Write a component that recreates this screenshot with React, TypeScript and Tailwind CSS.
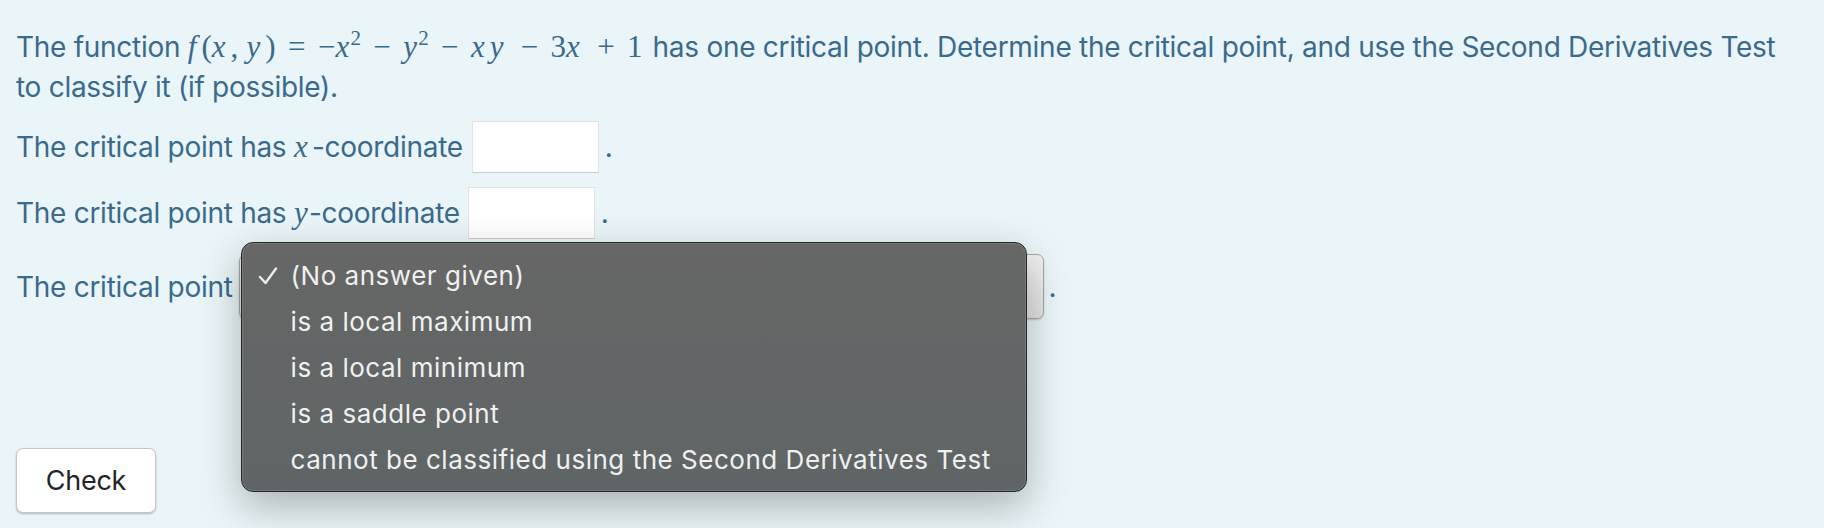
import React from 'react';

const Var = ({ children, tight }: { children: React.ReactNode; tight?: boolean }) => (
  <span className={`font-['Liberation_Serif',serif] italic text-[31px] tracking-normal ${tight ? 'mr-[0.04em]' : 'mr-[0.16em]'}`}>
    {children}
  </span>
);

const Op = ({ children }: { children: React.ReactNode }) => (
  <span className="font-['Liberation_Serif',serif] text-[31px] tracking-normal mx-[0.4em]">{children}</span>
);

const Num = ({ children }: { children: React.ReactNode }) => (
  <span className="font-['Liberation_Serif',serif] text-[31px] tracking-normal">{children}</span>
);

const Sq = () => (
  <sup className="font-['Liberation_Serif',serif] text-[21px] tracking-normal top-[-0.55em]">2</sup>
);

const options = [
  '(No answer given)',
  'is a local maximum',
  'is a local minimum',
  'is a saddle point',
  'cannot be classified using the Second Derivatives Test',
];

const Check = () => (
  <svg width="20" height="18" viewBox="0 0 20 18" className="block">
    <path d="M2 10 L7.5 16 L18 1.5" fill="none" stroke="#ececec" strokeWidth="2.4" strokeLinecap="round" strokeLinejoin="round" />
  </svg>
);

const App: React.FC = () => {
  return (
    <div className="h-[528px] w-full overflow-hidden bg-[#e9f5f8] pl-[16px] pt-[27px] font-['Inter',sans-serif] text-[28px] leading-[40px] tracking-[-0.01em] text-[#3a6a8c]">
      <p className="whitespace-nowrap">
        The function{' '}
        <Var>f</Var>
        <Num>(</Num>
        <Var>x</Var>
        <Num>,</Num>
        <span className="ml-[0.3em]" />
        <Var>y</Var>
        <Num>)</Num>
        <Op>=</Op>
        <Num>−</Num>
        <Var tight>x</Var>
        <Sq />
        <Op>−</Op>
        <Var tight>y</Var>
        <Sq />
        <Op>−</Op>
        <Var>x</Var>
        <Var>y</Var>
        <Op>−</Op>
        <Num>3</Num>
        <Var>x</Var>
        <Op>+</Op>
        <Num>1</Num>
        <span className="ml-[10px]">has one critical point. Determine the critical point, and use the Second Derivatives Test</span>
        <br />
        to classify it (if possible).
      </p>

      <div className="mt-[14px] flex h-[52px] items-center whitespace-nowrap">
        <span>
          The critical point has <Var tight>x</Var>
          <span className="ml-[3px]">-coordinate</span>
        </span>
        <input
          type="text"
          className="ml-[9px] h-[52px] w-[127px] border border-[#dfe3e5] border-b-[#c9cdd0] bg-white outline-none"
        />
        <span className="ml-[6px]">.</span>
      </div>

      <div className="mt-[14px] flex h-[52px] items-center whitespace-nowrap">
        <span>
          The critical point has <Var tight>y</Var>
          <span>-coordinate</span>
        </span>
        <input
          type="text"
          className="ml-[8px] h-[52px] w-[127px] border border-[#dfe3e5] border-b-[#c9cdd0] bg-white outline-none"
        />
        <span className="ml-[6px]">.</span>
      </div>

      <div className="mt-[15px] flex h-[65px] items-center whitespace-nowrap">
        <span>The critical point</span>
        <div className="relative ml-[6px] h-[65px] w-[805px]">
          <div className="h-full w-full rounded-[7px] border border-[#a8a8a8] bg-gradient-to-b from-[#f3f3f3] to-[#e2e2e2] shadow-[0_1px_2px_rgba(0,0,0,0.2)]" />
          <div className="absolute left-[2px] top-[-12px] z-10 w-[786px] rounded-[12px] border border-[#262828] bg-gradient-to-b from-[#666766] to-[#5f6566] pb-[8px] pt-[10px] font-['Inter',sans-serif] text-[26px] leading-[46px] tracking-[0.02em] text-[#f0f0f0] shadow-[0_14px_40px_rgba(0,0,0,0.28),inset_0_0_0_1px_rgba(255,255,255,0.12)]">
            {options.map((o, i) => (
              <div key={o} className="flex items-center">
                <div className="flex w-[49px] justify-end pr-[13px]">{i === 0 && <Check />}</div>
                <span>{o}</span>
              </div>
            ))}
          </div>
        </div>
        <span className="ml-[5px]">.</span>
      </div>

      <button className="mt-[129px] block h-[65px] w-[140px] rounded-[7px] border border-[#c6c6c6] bg-white text-[27px] text-[#212529] shadow-[0_1px_2px_rgba(0,0,0,0.25)]">
        Check
      </button>
    </div>
  );
};

export default App;
